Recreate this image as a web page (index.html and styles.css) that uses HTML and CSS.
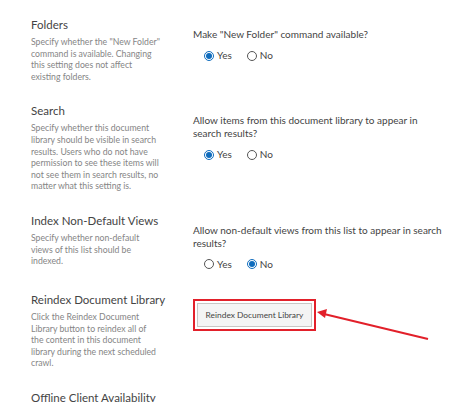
FILE: index.html
```html
<!DOCTYPE html>
<html lang="en">
<head>
  <meta charset="UTF-8" />
  <meta name="viewport" content="width=device-width, initial-scale=1.0" />
  <title>Advanced Settings</title>
  <link rel="stylesheet" href="styles.css">
</head>
<body>
  <div class="settings">
    <div class="section">
      <div class="info">
        <h3>Folders</h3>
        <p>Specify whether the "New Folder" command is available. Changing this setting does not affect existing folders.</p>
      </div>
      <div class="field">
        <div class="question">Make "New Folder" command available?</div>
        <div class="choices">
          <label class="radio checked"><span class="dot"></span>Yes</label>
          <label class="radio"><span class="dot"></span>No</label>
        </div>
      </div>
    </div>

    <div class="section">
      <div class="info">
        <h3>Search</h3>
        <p>Specify whether this document library should be visible in search results. Users who do not have permission to see these items will not see them in search results, no matter what this setting is.</p>
      </div>
      <div class="field">
        <div class="question">Allow items from this document library to appear in<br>search results?</div>
        <div class="choices">
          <label class="radio checked"><span class="dot"></span>Yes</label>
          <label class="radio"><span class="dot"></span>No</label>
        </div>
      </div>
    </div>

    <div class="section">
      <div class="info">
        <h3>Index Non-Default Views</h3>
        <p>Specify whether non-default views of this list should be indexed.</p>
      </div>
      <div class="field">
        <div class="question">Allow non-default views from this list to appear in search results?</div>
        <div class="choices">
          <label class="radio"><span class="dot"></span>Yes</label>
          <label class="radio checked"><span class="dot"></span>No</label>
        </div>
      </div>
    </div>

    <div class="section">
      <div class="info">
        <h3>Reindex Document Library</h3>
        <p>Click the Reindex Document Library button to reindex all of<br>the content in this document library during the next scheduled crawl.</p>
      </div>
      <div class="field field-button">
        <div class="highlight">
          <button class="btn">Reindex Document Library</button>
        </div>
      </div>
    </div>

    <div class="section">
      <div class="info">
        <h3>Offline Client Availability</h3>
      </div>
    </div>
  </div>

  <!-- callout arrow pointing at the button -->
  <svg class="arrow" width="474" height="402" viewBox="0 0 474 402">
    <line x1="428" y1="339" x2="324" y2="314" stroke="#e2202a" stroke-width="2" />
    <polygon points="317,312 327,309 325,318" fill="#e2202a" />
  </svg>
</body>
</html>
```

FILE: styles.css
```css
* { box-sizing: border-box; }
body {
  font-family: "Segoe UI", Lato, sans-serif;
  margin: 0;
  background-color: #fff;
  color: #444;
  overflow: hidden;
}
.settings {
  padding: 18px 0 0 31px;
}
.section {
  display: grid;
  grid-template-columns: 130px 1fr;
  column-gap: 32px;
  padding-bottom: 22px;
}
.info h3 {
  margin: 0 0 4px;
  font-size: 11.5px;
  font-weight: normal;
  line-height: 14px;
  white-space: nowrap;
  color: #444;
}
.info p {
  margin: 0;
  font-size: 8.7px;
  line-height: 11.6px;
  color: #858585;
}
.field {
  padding-top: 10px;
}
.field-button {
  padding-top: 6px;
}
.question {
  font-size: 10px;
  line-height: 13px;
  color: #444;
  max-width: 270px;
}
.choices {
  display: flex;
  gap: 15px;
  margin-top: 8px;
  padding-left: 11px;
}
.radio {
  display: flex;
  align-items: center;
  gap: 3px;
  font-size: 10px;
  line-height: 13px;
  color: #444;
}
.dot {
  width: 10px;
  height: 10px;
  border: 1px solid #555;
  border-radius: 50%;
  background: #fff;
  position: relative;
}
.radio.checked .dot {
  border-color: #0f6cbd;
}
.radio.checked .dot::after {
  content: "";
  position: absolute;
  left: 1px;
  top: 1px;
  width: 6px;
  height: 6px;
  border-radius: 50%;
  background: #0f6cbd;
}
.highlight {
  display: inline-block;
  border: 2px solid #e2202a;
  padding: 2px;
}
.btn {
  display: block;
  width: 115px;
  height: 24px;
  font-family: inherit;
  font-size: 8.4px;
  white-space: nowrap;
  color: #444;
  background: #f4f4f4;
  border: 1px solid #c8c6c4;
  padding: 0;
}
.arrow {
  position: absolute;
  left: 0;
  top: 0;
  pointer-events: none;
}
```
